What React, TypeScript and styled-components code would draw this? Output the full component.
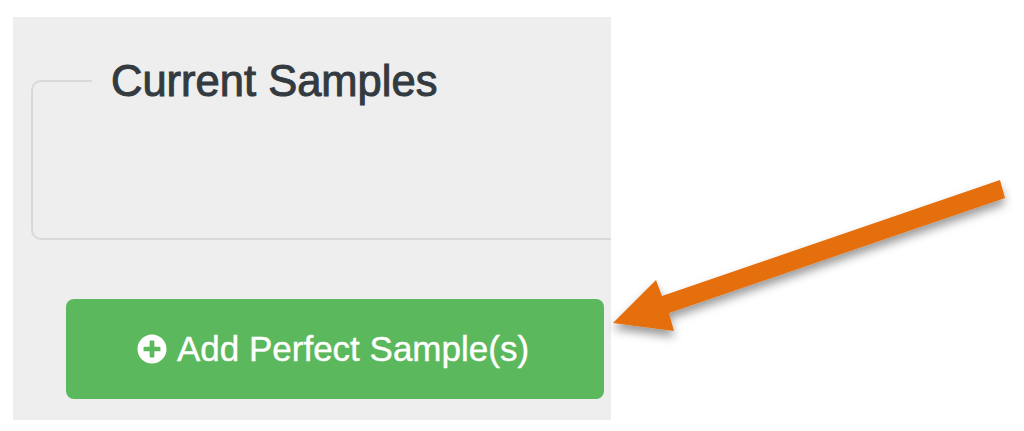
import styled, { createGlobalStyle } from "styled-components";
import { FaPlusCircle } from "react-icons/fa";

const GlobalStyle = createGlobalStyle`
  html, body {
    margin: 0;
    padding: 0;
    background: #fff;
    font-family: "Liberation Sans", Arial, sans-serif;
  }
`;

const Page = styled.div`
  position: relative;
  width: 1024px;
  height: 431px;
  overflow: hidden;
  padding: 17px 0 0 13px;
  box-sizing: border-box;
`;

const Panel = styled.div`
  width: 598px;
  height: 403px;
  background: #eeeeee;
  overflow: hidden;
  padding: 40px 0 0 18px;
  box-sizing: border-box;
`;

const SampleSet = styled.fieldset`
  width: 640px;
  height: 183px;
  margin: 0;
  padding: 0;
  box-sizing: border-box;
  border: 2px solid #d9d9d9;
  border-radius: 10px;
`;

const SampleLegend = styled.legend`
  width: 100%;
  margin-left: 59px;
  padding: 0 19px;
  box-sizing: border-box;
  font-size: 43.5px;
  line-height: 48px;
  color: #333a40;
  -webkit-text-stroke: 1px #333a40;
`;

const AddButton = styled.button`
  display: flex;
  align-items: center;
  justify-content: center;
  gap: 10px;
  width: 538px;
  height: 100px;
  margin: 59px 0 0 35px;
  padding: 0 4px 0 0;
  border: 0;
  border-radius: 8px;
  background: #5cb85c;
  color: #ffffff;
  font-family: inherit;
  font-size: 35px;
  -webkit-text-stroke: 0.4px #ffffff;
`;

const Arrow = styled.svg`
  position: absolute;
  top: 0;
  left: 0;
  pointer-events: none;
`;

export default function App() {
  return (
    <Page>
      <GlobalStyle />
      <Panel>
        <SampleSet>
          <SampleLegend>Current Samples</SampleLegend>
        </SampleSet>
        <AddButton>
          <FaPlusCircle size={30} />
          Add Perfect Sample(s)
        </AddButton>
      </Panel>
      <Arrow width="1024" height="431" viewBox="0 0 1024 431">
        <defs>
          <filter id="arrowShadow" x="-10%" y="-20%" width="120%" height="150%">
            <feDropShadow dx="0" dy="6" stdDeviation="5" floodColor="#000" floodOpacity="0.4" />
          </filter>
        </defs>
        <path
          d="M613 323 L656 280 L662 296 L1000 180 L1005 198 L669 313 L674 331 Z"
          fill="#e56e0b"
          filter="url(#arrowShadow)"
        />
      </Arrow>
    </Page>
  );
}
